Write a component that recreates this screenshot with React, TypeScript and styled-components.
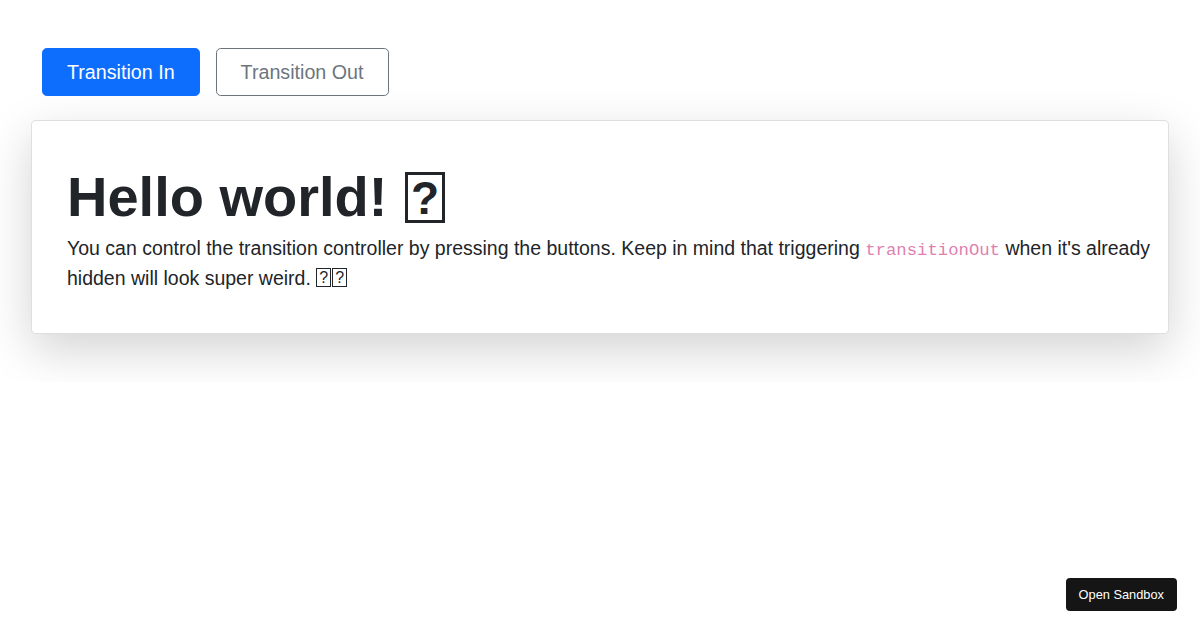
import React from "react";
import styled, { createGlobalStyle } from "styled-components";

const Global = createGlobalStyle`
  html, body { margin: 0; padding: 0; background: #fff; }
  body {
    font-family: "Liberation Sans", Arial, sans-serif;
    color: #212529;
    font-size: 16px;
    line-height: 1.5;
  }
  * { box-sizing: border-box; }
`;

const Page = styled.div`
  padding: 48px 42px;
`;

const Toolbar = styled.div`
  display: flex;
  gap: 16px;
  margin-bottom: 24px;
`;

const Button = styled.button<{ $variant: "primary" | "outline" }>`
  font-family: "Liberation Sans", Arial, sans-serif;
  font-size: 19.7px;
  line-height: 30px;
  padding: 8px 24px;
  border-radius: 4.8px;
  border: 1px solid ${(p) => (p.$variant === "primary" ? "#0d6efd" : "#6c757d")};
  background: ${(p) => (p.$variant === "primary" ? "#0d6efd" : "#fff")};
  color: ${(p) => (p.$variant === "primary" ? "#fff" : "#6c757d")};
  cursor: pointer;
`;

const Card = styled.div`
  margin: 0 -11px;
  background: #fff;
  border: 1px solid rgba(0, 0, 0, 0.125);
  border-radius: 5px;
  box-shadow: 0 16px 48px rgba(0, 0, 0, 0.175);
  padding: 42px 12px 40px 35px;
`;

const Title = styled.h1`
  margin: 0 0 3px;
  font-size: 56px;
  line-height: 1.2;
  font-weight: 700;
  color: #212529;
`;

const Lead = styled.p`
  margin: 0;
  font-size: 19.5px;
  line-height: 30px;
  color: #212529;
`;

const Code = styled.code`
  font-family: "Liberation Mono", "Courier New", monospace;
  font-size: 17.3px;
  line-height: 1;
  color: #e07fb0;
`;

/* Missing-glyph box ("tofu") as shown in the reference for emoji */
const Tofu = styled.span<{ $big?: boolean }>`
  display: inline-block;
  overflow: hidden;
  box-sizing: border-box;
  text-align: center;
  font-family: "Liberation Sans", Arial, sans-serif;
  color: #212529;
  border: ${(p) => (p.$big ? "3px" : "1.5px")} solid #212529;
  width: ${(p) => (p.$big ? "40px" : "15px")};
  height: ${(p) => (p.$big ? "51px" : "19px")};
  line-height: ${(p) => (p.$big ? "46px" : "17px")};
  font-size: ${(p) => (p.$big ? "46px" : "16px")};
  font-weight: ${(p) => (p.$big ? 700 : 400)};
  vertical-align: ${(p) => (p.$big ? "-7px" : "-2px")};
  margin-left: ${(p) => (p.$big ? "2px" : "0")};
  margin-right: ${(p) => (p.$big ? "0" : "1px")};
`;

const SandboxButton = styled.a`
  position: fixed;
  right: 23px;
  bottom: 19px;
  background: #151515;
  color: #fff;
  font-family: "Liberation Sans", Arial, sans-serif;
  font-size: 12.8px;
  line-height: 15px;
  padding: 9px 13px 9px;
  border-radius: 4px;
  text-decoration: none;
`;

export default function App() {
  return (
    <>
      <Global />
      <Page>
        <Toolbar>
          <Button $variant="primary">Transition In</Button>
          <Button $variant="outline">Transition Out</Button>
        </Toolbar>
        <Card>
          <Title>
            Hello world! <Tofu $big>?</Tofu>
          </Title>
          <Lead>
            You can control the transition controller by pressing the buttons. Keep in mind that
            triggering <Code>transitionOut</Code> when it's already hidden will look super weird.{" "}
            <Tofu>?</Tofu>
            <Tofu>?</Tofu>
          </Lead>
        </Card>
      </Page>
      <SandboxButton href="#">Open Sandbox</SandboxButton>
    </>
  );
}
